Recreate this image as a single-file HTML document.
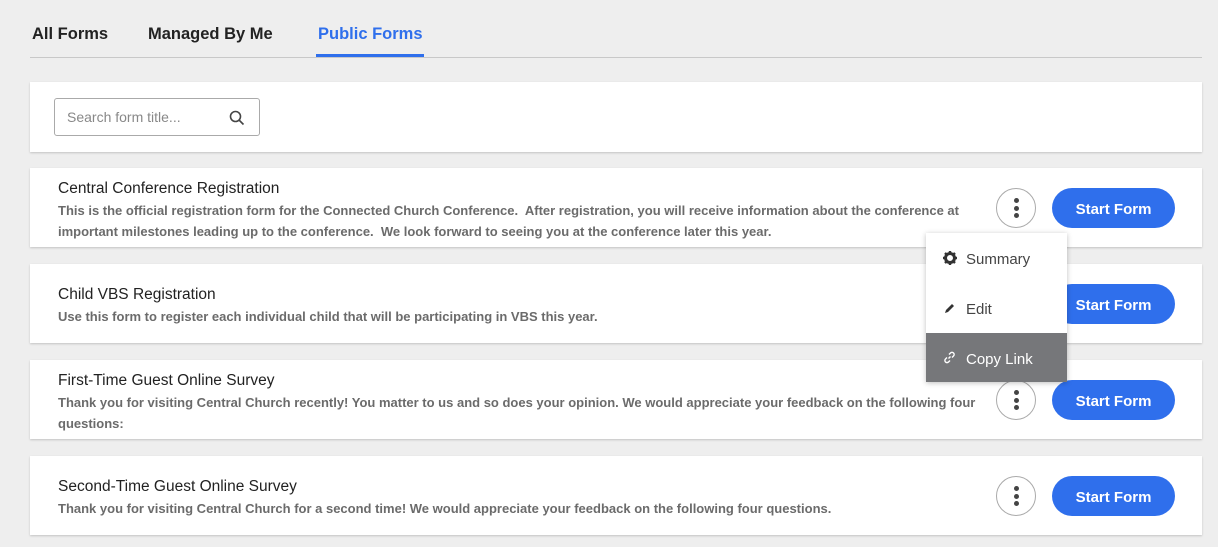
<!DOCTYPE html>
<html><head><meta charset="utf-8"><style>
*{box-sizing:border-box;margin:0;padding:0}
body{width:1218px;height:547px;background:#eeeeee;font-family:"Liberation Sans",sans-serif;position:relative;overflow:hidden;color:#222}
.tab{position:absolute;top:25px;font-size:16.5px;font-weight:bold;color:#222}
.line{position:absolute;left:30px;top:57px;width:1172px;height:1px;background:#c8c8c8}
.card{position:absolute;left:30px;width:1172px;background:#fff;box-shadow:0 1px 2px rgba(0,0,0,.18)}
.t{position:absolute;left:28px;font-size:15.5px;color:#222}
.d{position:absolute;left:28px;font-size:13px;font-weight:bold;color:#6b6b6b;line-height:21px;white-space:nowrap}
.btn{position:absolute;left:1022px;width:123px;height:40px;border-radius:20px;background:#2f6fec;color:#fff;font-weight:bold;font-size:15px;text-align:center;line-height:43px}
.keb{position:absolute;left:966px;width:40px;height:40px;border-radius:50%;border:1px solid #aaa;background:#fff}
.keb i{position:absolute;left:17px;width:5px;height:5px;border-radius:50%;background:#444}
.menu{position:absolute;left:926px;top:233px;width:141px;height:149px;background:#fff;box-shadow:0 1px 5px rgba(0,0,0,.25)}
.mi{position:absolute;left:0;width:141px;height:50px;font-size:15px;color:#444;line-height:53px;padding-left:40px}
</style></head><body>
<div class="tab" style="left:32px">All Forms</div>
<div class="tab" style="left:148px">Managed By Me</div>
<div class="tab" style="left:318px;color:#2f6fec">Public Forms</div>
<div class="line"></div>
<div style="position:absolute;left:316px;top:54px;width:108px;height:3px;background:#2f6fec"></div>

<div class="card" style="top:82px;height:70px">
 <div style="position:absolute;left:24px;top:16px;width:206px;height:38px;border:1px solid #aaa;border-radius:3px;font-size:14px;color:#888;line-height:37px;padding-left:12px">Search form title...
  <svg style="position:absolute;left:174px;top:11px" width="16" height="16" viewBox="0 0 16 16"><circle cx="6.5" cy="6.5" r="5" fill="none" stroke="#444" stroke-width="1.6"/><path d="M10 10l4.5 4.5" stroke="#444" stroke-width="1.6"/></svg></div>
</div>

<div class="card" style="top:168px;height:79px">
 <div class="t" style="top:12px">Central Conference Registration</div>
 <div class="d" style="top:32px">This is the official registration form for the Connected Church Conference.&nbsp; After registration, you will receive information about the conference at<br>important milestones leading up to the conference.&nbsp; We look forward to seeing you at the conference later this year.</div>
 <div class="keb" style="top:20px"><i style="top:9px"></i><i style="top:16.5px"></i><i style="top:24px"></i></div>
 <div class="btn" style="top:20px">Start Form</div>
</div>

<div class="card" style="top:264px;height:79px">
 <div class="t" style="top:22px">Child VBS Registration</div>
 <div class="d" style="top:42px">Use this form to register each individual child that will be participating in VBS this year.</div>
 <div class="btn" style="top:20px">Start Form</div>
</div>

<div class="card" style="top:360px;height:79px">
 <div class="t" style="top:12px">First-Time Guest Online Survey</div>
 <div class="d" style="top:32px">Thank you for visiting Central Church recently! You matter to us and so does your opinion. We would appreciate your feedback on the following four<br>questions:</div>
 <div class="keb" style="top:20px"><i style="top:9px"></i><i style="top:16.5px"></i><i style="top:24px"></i></div>
 <div class="btn" style="top:20px">Start Form</div>
</div>

<div class="card" style="top:456px;height:79px">
 <div class="t" style="top:22px">Second-Time Guest Online Survey</div>
 <div class="d" style="top:42px">Thank you for visiting Central Church for a second time! We would appreciate your feedback on the following four questions.</div>
 <div class="keb" style="top:20px"><i style="top:9px"></i><i style="top:16.5px"></i><i style="top:24px"></i></div>
 <div class="btn" style="top:20px">Start Form</div>
</div>

<div class="menu">
 <div class="mi" style="top:0">Summary
  <svg style="position:absolute;left:17px;top:18px" width="14" height="14" viewBox="0 0 14 14"><circle cx="7" cy="7" r="4.5" fill="none" stroke="#333" stroke-width="3"/><g stroke="#333" stroke-width="2.4"><path d="M7 0v3M7 11v3M0 7h3M11 7h3M2 2l2 2M10 10l2 2M12 2l-2 2M2 12l2-2"/></g></svg></div>
 <div class="mi" style="top:50px">Edit
  <svg style="position:absolute;left:18px;top:19px" width="12" height="12" viewBox="0 0 12 12"><path d="M1 11l1-3 6-6 2 2-6 6z" fill="#333"/></svg></div>
 <div class="mi" style="top:100px;height:49px;background:#76777a;color:#fff">Copy Link
  <svg style="position:absolute;left:17px;top:18px" width="13" height="13" viewBox="0 0 13 13" fill="none" stroke="#fff" stroke-width="1.4"><path d="M5.5 7.5l2-2"/><path d="M6 3.5l1.5-1.5a2 2 0 013 3L9 6.5"/><path d="M7 9.5L5.5 11a2 2 0 01-3-3L4 6.5"/></svg></div>
</div>
</body></html>
